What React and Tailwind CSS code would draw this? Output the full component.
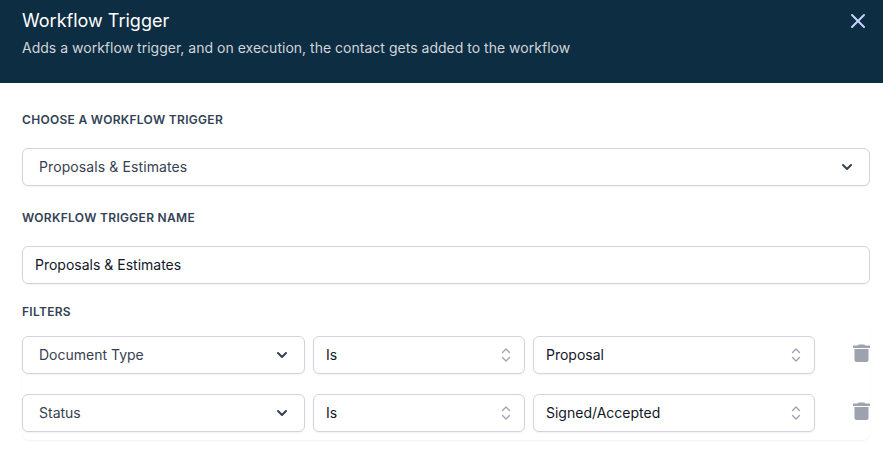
import React from 'react';
import { X } from 'lucide-react';

const font = "font-['Inter',sans-serif]";

const TrashIcon = () => (
  <svg viewBox="0 0 17 18" fill="currentColor" className="w-[17px] h-[18px]">
    <path d="M5.5 0.5h6l0.5 1h4a1 1 0 0 1 1 1V4H0V2.5a1 1 0 0 1 1-1h4z" />
    <path d="M1.5 5h14v11a2 2 0 0 1-2 2h-10a2 2 0 0 1-2-2z" />
  </svg>
);

const ChevronDownIcon = () => (
  <svg viewBox="0 0 20 20" fill="currentColor" className="w-5 h-5 shrink-0 mr-3 text-[#374151]">
    <path
      fillRule="evenodd"
      clipRule="evenodd"
      d="M5.293 7.293a1 1 0 0 1 1.414 0L10 10.586l3.293-3.293a1 1 0 1 1 1.414 1.414l-4 4a1 1 0 0 1-1.414 0l-4-4a1 1 0 0 1 0-1.414z"
    />
  </svg>
);

const UpDownIcon = () => (
  <svg
    viewBox="0 0 20 20"
    fill="none"
    stroke="currentColor"
    strokeWidth="1.25"
    strokeLinecap="round"
    strokeLinejoin="round"
    className="w-5 h-5 shrink-0 mr-2 text-[#9ca3af]"
  >
    <path d="M6.5 7.5 10 4l3.500 3.500" />
    <path d="M13.500 12.500 10 16l-3.500-3.500" />
  </svg>
);

const Label = ({ children, className = '' }) => (
  <div className={`text-xs leading-4 font-semibold uppercase tracking-[0.3px] text-[#334155] ${className}`}>
    {children}
  </div>
);

const SelectBox = ({ value, className = '', textClass = '', chevrons, dark }) => (
  <div
    className={`flex items-center justify-between h-[38px] bg-white border border-[#d1d5db] rounded-md shadow-xs text-sm ${
      dark ? 'pl-3 text-[#111827]' : 'pl-4 text-[#374151]'
    } ${className}`}
  >
    <span className={textClass}>{value}</span>
    {chevrons ? <UpDownIcon /> : <ChevronDownIcon />}
  </div>
);

const FilterRow = ({ field, value }) => (
  <div className="flex items-center gap-2">
    <SelectBox value={field} className="w-[283px] shrink-0" />
    <SelectBox value="Is" className="w-[212px] shrink-0" chevrons dark />
    <SelectBox value={value} className="w-[282px] shrink-0" chevrons dark />
    <div className="ml-[30px] -mt-1 shrink-0 text-[#9ca3af]">
      <TrashIcon />
    </div>
  </div>
);

export default function App() {
  return (
    <div className={`w-[883px] h-[449px] overflow-hidden bg-white ${font}`}>
      <div className="h-[83px] bg-[#0d2d42] px-[22px] pt-[9px] relative">
        <div className="text-lg leading-6 font-normal text-white">Workflow Trigger</div>
        <div className="mt-[5px] text-sm leading-5 tracking-[0.015px] text-[#d1d5db]">
          Adds a workflow trigger, and on execution, the contact gets added to the workflow
        </div>
        <X className="absolute top-[9px] right-[13px] w-6 h-6 text-[#c7d2fe]" strokeWidth={2} />
      </div>

      <div className="pl-[22px] pr-[13px]">
        <Label className="pt-[29px]">Choose a workflow trigger</Label>
        <SelectBox value="Proposals & Estimates" textClass="tracking-[0.1px]" className="mt-5" />
        <Label className="mt-6">Workflow trigger name</Label>
        <div className="mt-5 h-[38px] flex items-center pl-3 border border-[#d1d5db] rounded-md shadow-xs text-sm text-[#111827]">
          Proposals & Estimates
        </div>
        <Label className="mt-5">Filters</Label>
        <div className="mt-[3px] pt-[13px] pb-2 flex flex-col gap-5 rounded-lg shadow-[0_1px_2px_rgba(0,0,0,0.05)]">
          <FilterRow field="Document Type" value="Proposal" />
          <FilterRow field="Status" value="Signed/Accepted" />
        </div>
      </div>
    </div>
  );
}
